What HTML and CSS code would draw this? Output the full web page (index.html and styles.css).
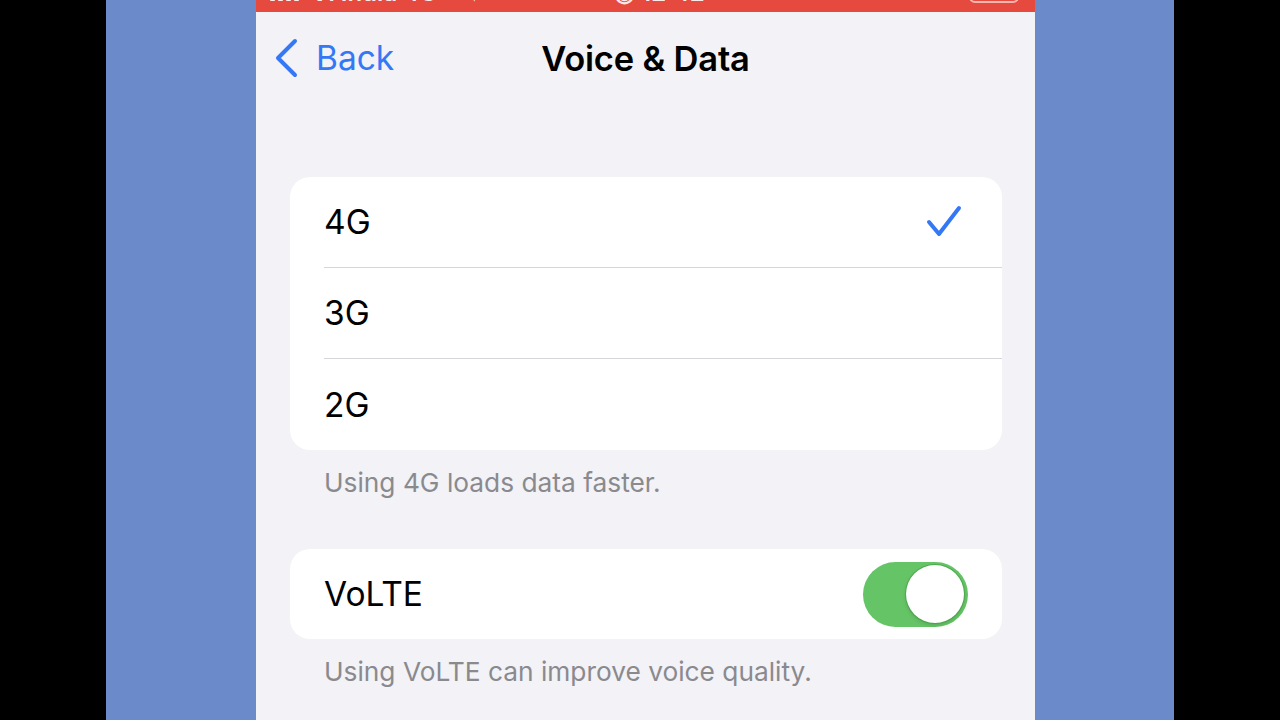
FILE: index.html
```html
<!DOCTYPE html>
<html lang="en">
<head>
  <meta charset="UTF-8">
  <title>Voice &amp; Data</title>
  <link rel="stylesheet" href="styles.css">
</head>
<body>

<div class="frame">
  <div class="side-black"></div>
  <div class="side-blue left"></div>

  <div class="phone">
    <!-- status bar, mostly cropped off the top -->
    <div class="status-bar">
      <div class="status-line">
        <div class="status-left">
          <span class="signal"><i></i><i></i><i></i><i></i></span>
          <span class="carrier">Vi India 4G</span>
          <span class="arrow">&#10148;</span>
        </div>
        <div class="status-mid">&#9673; 12:42</div>
        <div class="status-right"><span class="battery"></span></div>
      </div>
    </div>

    <!-- navigation -->
    <div class="nav-bar">
      <div class="back">
        <svg width="26" height="40" viewBox="0 0 26 40">
          <path d="M21 3 L4 20 L21 37" fill="none" stroke="#3478f6" stroke-width="4" stroke-linecap="round" stroke-linejoin="round"/>
        </svg>
        <span>Back</span>
      </div>
      <div class="nav-title">Voice &amp; Data</div>
    </div>

    <!-- network speed -->
    <div class="group">
      <div class="row">
        <span class="row-label">4G</span>
        <svg class="check" width="36" height="34" viewBox="0 0 36 34">
          <path d="M3 17 L13 29 L33 3" fill="none" stroke="#3478f6" stroke-width="4" stroke-linecap="round" stroke-linejoin="round"/>
        </svg>
      </div>
      <div class="row">
        <span class="row-label">3G</span>
      </div>
      <div class="row">
        <span class="row-label">2G</span>
      </div>
    </div>
    <p class="group-footer">Using 4G loads data faster.</p>

    <!-- VoLTE -->
    <div class="group volte">
      <div class="row">
        <span class="row-label">VoLTE</span>
        <div class="toggle on"><div class="knob"></div></div>
      </div>
    </div>
    <p class="group-footer">Using VoLTE can improve voice quality.</p>
  </div>

  <div class="side-blue right"></div>
  <div class="side-black"></div>
</div>

</body>
</html>
```

FILE: styles.css
```css
body {
  margin: 0;
  font-family: Inter, 'Liberation Sans', sans-serif;
  overflow: hidden;
}

.frame {
  display: flex;
  width: 1280px;
  height: 720px;
}

.side-black {
  width: 106px;
  background-color: #000;
}

.side-blue {
  background-color: #6a8ac9;
}

.side-blue.left {
  width: 150px;
}

.side-blue.right {
  width: 139px;
}

.phone {
  width: 779px;
  background-color: #f2f2f7;
  display: flex;
  flex-direction: column;
  overflow: hidden;
}

/* status bar */
.status-bar {
  height: 12px;
  background-color: #e64a3e;
  overflow: hidden;
  flex-shrink: 0;
}

.status-line {
  display: flex;
  align-items: flex-end;
  height: 24px;
  margin-top: -19px;
  padding: 0 16px 0 14px;
  color: rgba(255, 255, 255, 0.9);
  font-size: 24px;
  font-weight: 600;
  line-height: 24px;
}

.status-left {
  display: flex;
  align-items: flex-end;
  gap: 12px;
  width: 330px;
}

.signal {
  display: flex;
  align-items: flex-end;
  gap: 3px;
  padding-bottom: 4px;
}

.signal i {
  display: block;
  width: 5px;
  height: 14px;
  background-color: rgba(255, 255, 255, 0.9);
  border-radius: 1px;
}

.arrow {
  font-size: 16px;
  transform: rotate(-45deg);
  margin-left: 18px;
}

.status-mid {
  flex: 1;
  padding-left: 14px;
}

.status-right {
  display: flex;
  align-items: flex-end;
}

.battery {
  display: block;
  width: 46px;
  height: 20px;
  border: 2px solid rgba(255, 255, 255, 0.6);
  border-radius: 6px;
  margin-bottom: 2px;
}

/* navigation */
.nav-bar {
  position: relative;
  height: 92px;
  display: flex;
  align-items: center;
  justify-content: center;
  flex-shrink: 0;
}

.back {
  position: absolute;
  left: 18px;
  top: 26px;
  display: flex;
  align-items: center;
  gap: 16px;
  color: #3478f6;
  font-size: 33.5px;
}

.nav-title {
  font-size: 34.5px;
  font-weight: 600;
  color: #000;
  letter-spacing: -0.2px;
}

/* grouped list */
.group {
  margin: 73px 33px 0 34px;
  background-color: #fff;
  border-radius: 20px;
  overflow: hidden;
}

.row {
  height: 91px;
  margin-left: 34px;
  padding-right: 34px;
  display: flex;
  align-items: center;
  justify-content: space-between;
  border-bottom: 1.5px solid #d6d6da;
  box-sizing: border-box;
}

.row:last-child {
  border-bottom: none;
  height: 91px;
}

.row-label {
  font-size: 33.5px;
  color: #000;
}

.check {
  margin-right: 6px;
}

.group-footer {
  margin: 16px 0 0 68px;
  font-size: 26.3px;
  color: #8a8a8e;
  line-height: 34px;
}

.group.volte {
  margin-top: 49px;
}

.group.volte .row {
  height: 90px;
}

/* switch */
.toggle {
  width: 105px;
  height: 65px;
  border-radius: 33px;
  background-color: #65c466;
  display: flex;
  align-items: center;
  justify-content: flex-end;
  padding: 0 4px;
  box-sizing: border-box;
}

.knob {
  width: 58px;
  height: 58px;
  border-radius: 50%;
  background-color: #fff;
  box-shadow: 0 0 0 1px rgba(60, 150, 60, 0.5), 0 2px 4px rgba(0, 0, 0, 0.15);
}
```
